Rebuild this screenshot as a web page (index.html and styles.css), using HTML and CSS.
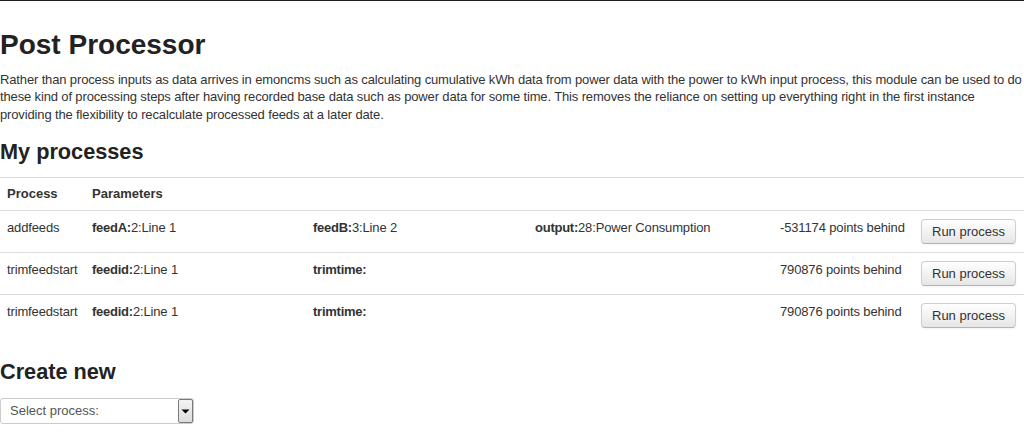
FILE: index.html
```html
<!DOCTYPE html>
<html>
<head>
<meta charset="utf-8">
<title>Post Processor</title>
<link rel="stylesheet" href="styles.css">
</head>
<body>
<div class="topbar"></div>
<div class="container">
  <h1 class="title">Post Processor</h1>
  <p class="intro">Rather than process inputs as data arrives in emoncms such as calculating cumulative kWh data from power data with the power to kWh input process, this module can be used to do these kind of processing steps after having recorded base data such as power data for some time. This removes the reliance on setting up everything right in the first instance providing the flexibility to recalculate processed feeds at a later date.</p>
  <h3 class="section">My processes</h3>
  <table class="processes">
    <colgroup>
      <col class="c1"><col class="c2"><col class="c3"><col class="c4"><col class="c5"><col class="c6">
    </colgroup>
    <thead>
      <tr><th>Process</th><th colspan="5">Parameters</th></tr>
    </thead>
    <tbody>
      <tr>
        <td>addfeeds</td>
        <td><b>feedA:</b>2:Line 1</td>
        <td><b>feedB:</b>3:Line 2</td>
        <td><b>output:</b>28:Power Consumption</td>
        <td>-531174 points behind</td>
        <td><button class="btn">Run process</button></td>
      </tr>
      <tr>
        <td>trimfeedstart</td>
        <td><b>feedid:</b>2:Line 1</td>
        <td><b>trimtime:</b></td>
        <td></td>
        <td>790876 points behind</td>
        <td><button class="btn">Run process</button></td>
      </tr>
      <tr>
        <td>trimfeedstart</td>
        <td><b>feedid:</b>2:Line 1</td>
        <td><b>trimtime:</b></td>
        <td></td>
        <td>790876 points behind</td>
        <td><button class="btn">Run process</button></td>
      </tr>
    </tbody>
  </table>
  <h3 class="section create">Create new</h3>
  <div class="select">
    <span class="select-text">Select process:</span>
    <span class="select-arrow"><svg width="9" height="5" viewBox="0 0 9 5"><path d="M0.5 0.5 H8.5 L4.5 4.5 Z" fill="#000"/></svg></span>
  </div>
</div>
</body>
</html>
```

FILE: styles.css
```css
html, body {
  margin: 0;
  padding: 0;
  background: #fff;
}
body {
  font-family: "Liberation Sans", Arial, sans-serif;
  font-size: 13px;
  line-height: 17px;
  color: #333;
}
.topbar {
  height: 1px;
  background: #1e1e1e;
  box-shadow: 0 1px 10px rgba(0, 0, 0, 0.1);
}
.container {
  padding: 0;
}
.title {
  font-size: 28px;
  line-height: 40px;
  font-weight: bold;
  color: #222;
  margin: 24px 0 5.7px 0;
}
.intro {
  margin: 0;
  line-height: 17.5px;
  letter-spacing: -0.14px;
}
.section {
  font-size: 21.7px;
  line-height: 30px;
  font-weight: bold;
  color: #222;
  margin: 13.7px 0 10.6px 0;
}
.section.create {
  margin: 20.4px 0 11.3px 0;
}
.processes {
  width: 1024px;
  table-layout: fixed;
  border-collapse: collapse;
  border-spacing: 0;
}
.c1 { width: 85px; }
.c2 { width: 221px; }
.c3 { width: 222px; }
.c4 { width: 245px; }
.c5 { width: 141px; }
.c6 { width: 110px; }
.processes th,
.processes td {
  text-align: left;
  vertical-align: top;
  border-top: 1px solid #ddd;
  padding: 8px 7px;
  line-height: 17px;
  white-space: nowrap;
}
.processes td {
  letter-spacing: -0.14px;
}
.processes th {
  padding: 7px 7px 8px 7px;
  font-weight: bold;
  color: #333;
}
.processes b {
  font-weight: bold;
  letter-spacing: -0.25px;
}
.btn {
  font-family: "Liberation Sans", Arial, sans-serif;
  font-size: 13px;
  line-height: 17px;
  color: #333;
  padding: 3px 10px;
  margin: 0;
  border: 1px solid #cfcfcf;
  border-bottom-color: #b3b3b3;
  border-radius: 4px;
  background: linear-gradient(to bottom, #ffffff, #e6e6e6);
  box-shadow: inset 0 1px 0 rgba(255, 255, 255, 0.2), 0 1px 2px rgba(0, 0, 0, 0.05);
  display: block;
}
.select {
  width: 194px;
  height: 26px;
  box-sizing: border-box;
  border: 1px solid #ccc;
  border-radius: 3px;
  display: flex;
  align-items: stretch;
  justify-content: space-between;
  background: #fff;
}
.select-text {
  padding-left: 9px;
  line-height: 24px;
  color: #555;
}
.select-arrow {
  width: 15px;
  box-sizing: border-box;
  border: 1px solid #7a7a7a;
  border-radius: 2px;
  background: linear-gradient(to bottom, #f4f4f4, #dcdcdc);
  display: flex;
  align-items: flex-start;
  justify-content: center;
  padding-top: 9px;
}
.select-arrow svg {
  display: block;
}
```
